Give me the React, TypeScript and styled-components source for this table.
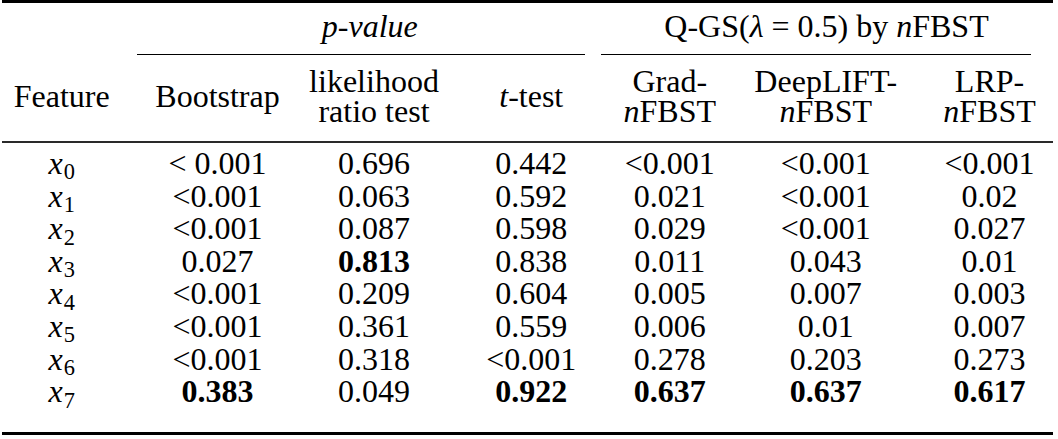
import React from "react";
import styled, { createGlobalStyle } from "styled-components";

const GlobalStyle = createGlobalStyle`
  html, body {
    margin: 0;
    padding: 0;
    background: #fff;
  }

  body {
    font-family: "Liberation Serif", "Times New Roman", serif;
    color: #000;
  }
`;

// column widths follow the rule ends, shift nudges the centred text
const COLUMNS = [
  { width: 137.5, shift: -9 },
  { width: 156, shift: 0 },
  { width: 157, shift: 0 },
  { width: 147.5, shift: 5 },
  { width: 147.5, shift: -4 },
  { width: 160.5, shift: -2 },
  { width: 145, shift: 9 },
];

const Sheet = styled.div`
  display: grid;
  grid-template-columns: ${COLUMNS.map((c) => `${c.width}px`).join(" ")};
  width: 1051px;
  margin-left: 2px;
  font-family: "Liberation Serif", serif;
  font-size: 32px;
`;

const Rule = styled.div<{ $weight: number; $tone?: string; $before?: number; $after?: number }>`
  grid-column: 1 / -1;
  height: ${(p) => p.$weight}px;
  background: ${(p) => p.$tone ?? "#000"};
  margin-top: ${(p) => p.$before ?? 0}px;
  margin-bottom: ${(p) => p.$after ?? 0}px;
`;

const GroupHead = styled.div<{ $span: string }>`
  grid-column: ${(p) => p.$span};
  text-align: center;
  line-height: 36px;
  padding: 5px 0 10px;
  white-space: nowrap;
`;

const CmidRule = styled.div<{ $span: string; $trimLeft: number; $trimRight: number }>`
  grid-column: ${(p) => p.$span};
  height: 1px;
  background: #000;
  margin-left: ${(p) => p.$trimLeft}px;
  margin-right: ${(p) => p.$trimRight}px;
`;

const shiftPadding = (col: number) => {
  const s = COLUMNS[col].shift;
  return s >= 0 ? `padding-left: ${s * 2}px;` : `padding-right: ${-s * 2}px;`;
};

const HeadCell = styled.div<{ $col: number }>`
  display: flex;
  flex-direction: column;
  align-items: center;
  justify-content: center;
  line-height: 30px;
  padding-top: 11px;
  padding-bottom: 15px;
  white-space: nowrap;
  ${(p) => shiftPadding(p.$col)}
`;

const Cell = styled.div<{ $col: number; $bold?: boolean }>`
  text-align: center;
  line-height: 32.6px;
  height: 32.6px;
  white-space: nowrap;
  font-weight: ${(p) => (p.$bold ? 700 : 400)};
  ${(p) => shiftPadding(p.$col)}
`;

const Em = styled.i`
  font-style: italic;
`;

const Sub = styled.sub`
  font-size: 0.7em;
  font-style: normal;
  vertical-align: -0.24em;
  line-height: 0;
  margin-left: 1px;
`;

const headers: React.ReactNode[][] = [
  ["Feature"],
  ["Bootstrap"],
  ["likelihood", "ratio test"],
  [
    <>
      <Em>t</Em>-test
    </>,
  ],
  [
    "Grad-",
    <>
      <Em>n</Em>FBST
    </>,
  ],
  [
    "DeepLIFT-",
    <>
      <Em>n</Em>FBST
    </>,
  ],
  [
    "LRP-",
    <>
      <Em>n</Em>FBST
    </>,
  ],
];

// a trailing * marks a bold value
const rows: string[][] = [
  ["< 0.001", "0.696", "0.442", "<0.001", "<0.001", "<0.001"],
  ["<0.001", "0.063", "0.592", "0.021", "<0.001", "0.02"],
  ["<0.001", "0.087", "0.598", "0.029", "<0.001", "0.027"],
  ["0.027", "0.813*", "0.838", "0.011", "0.043", "0.01"],
  ["<0.001", "0.209", "0.604", "0.005", "0.007", "0.003"],
  ["<0.001", "0.361", "0.559", "0.006", "0.01", "0.007"],
  ["<0.001", "0.318", "<0.001", "0.278", "0.203", "0.273"],
  ["0.383*", "0.049", "0.922*", "0.637*", "0.637*", "0.617*"],
];

const App: React.FC = () => (
  <>
    <GlobalStyle />
    <Sheet>
      <Rule $weight={3} />

      <GroupHead $span="2 / 5">
        <Em>p-value</Em>
      </GroupHead>
      <GroupHead $span="5 / 8">
        Q-GS(<Em>λ</Em> = 0.5) by <Em>n</Em>FBST
      </GroupHead>

      <CmidRule $span="2 / 5" $trimLeft={-3} $trimRight={15} />
      <CmidRule $span="5 / 8" $trimLeft={1} $trimRight={22} />

      {headers.map((lines, col) => (
        <HeadCell key={col} $col={col}>
          {lines.map((line, i) => (
            <span key={i}>{line}</span>
          ))}
        </HeadCell>
      ))}

      <Rule $weight={2} $tone="#2a2a2a" $after={4} />

      {rows.map((values, r) => (
        <React.Fragment key={r}>
          <Cell $col={0}>
            <Em>x</Em>
            <Sub>{r}</Sub>
          </Cell>
          {values.map((v, i) => (
            <Cell key={i} $col={i + 1} $bold={v.endsWith("*")}>
              {v.replace("*", "")}
            </Cell>
          ))}
        </React.Fragment>
      ))}

      <Rule $weight={3} $before={24} />
    </Sheet>
  </>
);

export default App;
